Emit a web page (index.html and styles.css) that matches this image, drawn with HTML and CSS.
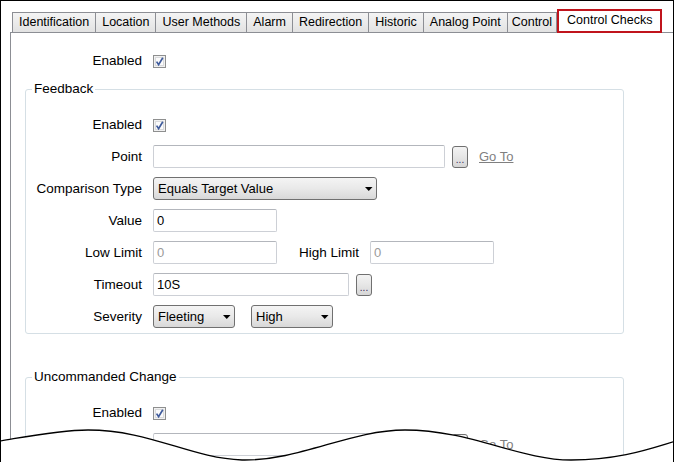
FILE: index.html
```html
<!DOCTYPE html>
<html lang="en">

<head>
    <meta charset="UTF-8">
    <title>Control Checks</title>
    <link rel="stylesheet" href="styles.css">
</head>

<body>
    <div class="frame">
        <div class="tabs">
            <div class="tab">Identification</div>
            <div class="tab">Location</div>
            <div class="tab">User Methods</div>
            <div class="tab">Alarm</div>
            <div class="tab">Redirection</div>
            <div class="tab">Historic</div>
            <div class="tab">Analog Point</div>
            <div class="tab narrow">Control</div>
            <div class="tab active">Control Checks</div>
        </div>

        <div class="panel">
            <div class="row">
                <label class="lbl">Enabled</label>
                <span class="check"><svg width="13" height="13" viewBox="0 0 13 13"><rect x="0.5" y="0.5" width="12" height="12" fill="#f1f1f1" stroke="#8e8f8f"/><rect x="2.5" y="2.5" width="8" height="8" fill="#fbfbfb" stroke="#d9dadc"/><path d="M3.6 6.6 L5.6 9.6 L9.8 2.8" fill="none" stroke="#3f5b9c" stroke-width="1.7"/></svg></span>
            </div>

            <fieldset class="group">
                <legend>Feedback</legend>
                <div class="row">
                    <label class="lbl">Enabled</label>
                    <span class="check"><svg width="13" height="13" viewBox="0 0 13 13"><rect x="0.5" y="0.5" width="12" height="12" fill="#f1f1f1" stroke="#8e8f8f"/><rect x="2.5" y="2.5" width="8" height="8" fill="#fbfbfb" stroke="#d9dadc"/><path d="M3.6 6.6 L5.6 9.6 L9.8 2.8" fill="none" stroke="#3f5b9c" stroke-width="1.7"/></svg></span>
                </div>
                <div class="row">
                    <label class="lbl">Point</label>
                    <input class="field w-point" type="text" value="">
                    <span class="dots">...</span>
                    <a class="link">Go To</a>
                </div>
                <div class="row">
                    <label class="lbl">Comparison Type</label>
                    <div class="combo w-combo"><span>Equals Target Value</span><svg width="8" height="4" viewBox="0 0 8 4"><path d="M0 0h7.5l-3.75 4z" fill="#000"/></svg></div>
                </div>
                <div class="row">
                    <label class="lbl">Value</label>
                    <input class="field w-short" type="text" value="0">
                </div>
                <div class="row">
                    <label class="lbl">Low Limit</label>
                    <input class="field w-short" type="text" value="0" disabled>
                    <label class="lbl-inline">High Limit</label>
                    <input class="field w-short" type="text" value="0" disabled>
                </div>
                <div class="row">
                    <label class="lbl">Timeout</label>
                    <input class="field w-timeout" type="text" value="10S">
                    <span class="dots">...</span>
                </div>
                <div class="row">
                    <label class="lbl">Severity</label>
                    <div class="combo w-sev"><span>Fleeting</span><svg width="8" height="4" viewBox="0 0 8 4"><path d="M0 0h7.5l-3.75 4z" fill="#000"/></svg></div>
                    <div class="combo w-sev next"><span>High</span><svg width="8" height="4" viewBox="0 0 8 4"><path d="M0 0h7.5l-3.75 4z" fill="#000"/></svg></div>
                </div>
            </fieldset>

            <fieldset class="group second">
                <legend>Uncommanded Change</legend>
                <div class="row">
                    <label class="lbl">Enabled</label>
                    <span class="check"><svg width="13" height="13" viewBox="0 0 13 13"><rect x="0.5" y="0.5" width="12" height="12" fill="#f1f1f1" stroke="#8e8f8f"/><rect x="2.5" y="2.5" width="8" height="8" fill="#fbfbfb" stroke="#d9dadc"/><path d="M3.6 6.6 L5.6 9.6 L9.8 2.8" fill="none" stroke="#3f5b9c" stroke-width="1.7"/></svg></span>
                </div>
                <div class="row">
                    <label class="lbl">Point</label>
                    <input class="field w-point" type="text" value="">
                    <span class="dots">...</span>
                    <a class="link">Go To</a>
                </div>
            </fieldset>
        </div>

        <!-- torn paper edge at the bottom -->
        <svg class="tear" width="676" height="50" viewBox="0 0 676 50">
            <path d="M0 29 C30 24 60 18 88 18 C150 18 190 46 242 48 C300 49 350 18 405 18 C470 18 520 48 571 48 C621 48 652 36 676 29 L676 50 L0 50 Z" fill="#fff"/>
            <path d="M0 29 C30 24 60 18 88 18 C150 18 190 46 242 48 C300 49 350 18 405 18 C470 18 520 48 571 48 C621 48 652 36 676 29" fill="none" stroke="#000" stroke-width="1.3"/>
        </svg>
    </div>
</body>

</html>
```

FILE: styles.css
```css
body {
    margin: 0;
    background-color: #FFFFFF;
    font-family: 'Liberation Sans', Arial, sans-serif;
    color: #000000;
}

.frame {
    position: relative;
    width: 674px;
    height: 462px;
    box-sizing: border-box;
    border: 1px solid #000000;
    border-bottom: none;
    overflow: hidden;
    background-color: #FFFFFF;
}

.tabs {
    display: flex;
    align-items: flex-end;
    height: 23px;
    margin: 8px 0 0 11px;
}

.tab {
    height: 20px;
    box-sizing: border-box;
    padding: 0 6px;
    border: 1px solid #8C8E94;
    border-left: none;
    border-bottom: none;
    background: linear-gradient(#F4F4F4, #E2E2E2);
    font-size: 12.5px;
    line-height: 19px;
    white-space: nowrap;
}

.tab:first-child {
    border-left: 1px solid #8C8E94;
}

.tab.narrow {
    padding: 0 4px;
}

.tab.active {
    position: relative;
    z-index: 1;
    height: 24px;
    margin-bottom: -1px;
    padding: 0 8px;
    border: 2px solid #C0141C;
    background: #FFFFFF;
    line-height: 19px;
}

.panel {
    margin-left: 9px;
    min-height: 440px;
    padding: 16px 0 0 14px;
    border-top: 1px solid #8C8E94;
    border-left: 1px solid #8C8E94;
}

.row {
    display: flex;
    align-items: center;
    height: 23px;
}

.row + .row {
    margin-top: 9px;
}

.panel > .row {
    padding-left: 1px;
}

.lbl {
    flex: none;
    width: 116px;
    margin-right: 11px;
    text-align: right;
    font-size: 13.5px;
}

.lbl-inline {
    margin: 0 11px 0 22px;
    font-size: 13.5px;
}

.check {
    display: flex;
    margin-top: 1px;
}

.group {
    box-sizing: border-box;
    width: 599px;
    min-width: 0;
    margin: 9px 0 0;
    padding: 16px 0 5px;
    border: 1px solid #D5DFE5;
    border-radius: 3px;
}

.group.second {
    margin-top: 35px;
}

.group legend {
    margin-left: 6px;
    padding: 0 2px;
    font-size: 13.5px;
    line-height: 16px;
}

.field {
    box-sizing: border-box;
    height: 23px;
    margin: 0;
    padding: 0 3px;
    border: 1px solid #CDD0D6;
    border-top-color: #B3B6BC;
    border-radius: 2px;
    background-color: #FFFFFF;
    color: #000000;
    font-family: 'Liberation Sans', Arial, sans-serif;
    font-size: 13px;
    outline: none;
}

.field:disabled {
    background-color: #FFFFFF;
    color: #9A9A9A;
}

.w-point {
    width: 292px;
}

.w-short {
    width: 124px;
}

.w-timeout {
    width: 196px;
}

.dots {
    box-sizing: border-box;
    display: flex;
    align-items: flex-end;
    justify-content: center;
    width: 16px;
    height: 22px;
    margin-left: 7px;
    padding-bottom: 3px;
    border: 1px solid #707070;
    border-radius: 3px;
    background: linear-gradient(#F3F3F3, #E6E6E6 50%, #D6D6D6);
    color: #3A2A58;
    font-size: 10px;
    line-height: 8px;
}

.link {
    margin-left: 11px;
    color: #7F7F7F;
    font-size: 13px;
    text-decoration: underline;
    cursor: pointer;
}

.combo {
    box-sizing: border-box;
    display: flex;
    align-items: center;
    justify-content: space-between;
    height: 23px;
    padding: 0 3px 0 4px;
    border: 1px solid #707070;
    border-radius: 3px;
    background: linear-gradient(#F4F4F4, #E9E9E9 50%, #D8D8D8);
    font-size: 13px;
}

.w-combo {
    width: 224px;
}

.w-sev {
    width: 82px;
}

.w-sev.next {
    margin-left: 16px;
}

.tear {
    position: absolute;
    left: -1px;
    bottom: 0;
}
```
